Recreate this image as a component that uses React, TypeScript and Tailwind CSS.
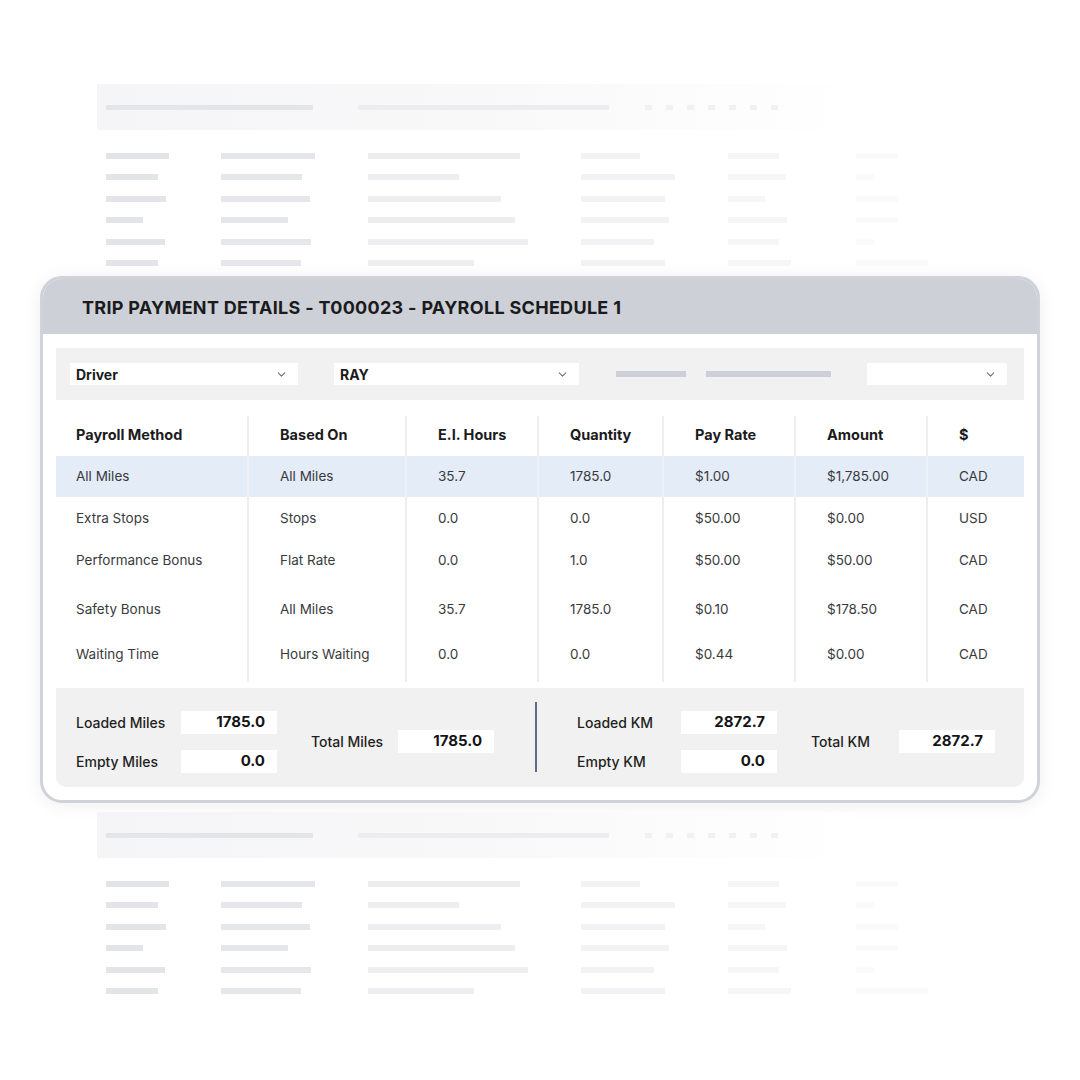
import React from 'react';
import { ChevronDown } from 'lucide-react';

const font = { fontFamily: 'Inter, "Noto Sans", sans-serif' };

// widths of the faded placeholder bars, per column, per row
const skelCols = [
  { w: [63, 52, 60, 37, 59, 52], cls: 'bg-[#e3e4e8]', col: 'w-[115px]' },
  { w: [94, 81, 89, 67, 90, 80], cls: 'bg-[#e6e7eb]', col: 'w-[147px]' },
  { w: [152, 91, 133, 147, 160, 106], cls: 'bg-[#eeeef1]', col: 'w-[213px]' },
  { w: [59, 94, 84, 88, 73, 84], cls: 'bg-[#f2f2f4]', col: 'w-[147px]' },
  { w: [51, 58, 37, 59, 51, 63], cls: 'bg-[#f6f6f7]', col: 'w-[128px]' },
  { w: [42, 18, 42, 42, 18, 72], cls: 'bg-[#fafafb]', col: 'w-[100px]' },
];

const SkeletonTable: React.FC = () => (
  <div className="ml-[97px] w-[760px]">
    <div className="h-[46px] flex items-center pl-[9px] gap-[45px] bg-gradient-to-r from-[#f5f5f7] via-[#f8f8f9] to-white">
      <div className="h-[5px] w-[207px] bg-[#e4e5e9]" />
      <div className="h-[5px] w-[251px] bg-[#ededf0]" />
      <div className="flex gap-[14px] ml-[-9px]">
        {[0, 1, 2, 3, 4, 5, 6].map((i) => (
          <div key={i} className="h-[5px] w-[7px] bg-[#f1f1f3]" />
        ))}
      </div>
    </div>
    <div className="flex pl-[9px] pt-[23px]">
      {skelCols.map((c, ci) => (
        <div key={ci} className={`${c.col} shrink-0 flex flex-col gap-[15.4px]`}>
          {c.w.map((w, ri) => (
            <div key={ri} className={`h-[6px] ${c.cls}`} style={{ width: w }} />
          ))}
        </div>
      ))}
    </div>
  </div>
);

const Select: React.FC<{ label: string; w: string }> = ({ label, w }) => (
  <div className={`${w} h-[22px] bg-white flex items-center justify-between pl-[6px] pr-[10px]`}>
    <span className="text-[14px] font-bold text-[#1b1b1d]">{label}</span>
    <ChevronDown className="w-[13px] h-[13px] text-[#6b7280]" strokeWidth={2} />
  </div>
);

const rows = [
  { h: 'h-[41px]', hl: true, c: ['All Miles', 'All Miles', '35.7', '1785.0', '$1.00', '$1,785.00', 'CAD'] },
  { h: 'h-[42px]', c: ['Extra Stops', 'Stops', '0.0', '0.0', '$50.00', '$0.00', 'USD'] },
  { h: 'h-[42px]', c: ['Performance Bonus', 'Flat Rate', '0.0', '1.0', '$50.00', '$50.00', 'CAD'] },
  { h: 'h-[56px]', c: ['Safety Bonus', 'All Miles', '35.7', '1785.0', '$0.10', '$178.50', 'CAD'] },
  { h: 'h-[35px]', c: ['Waiting Time', 'Hours Waiting', '0.0', '0.0', '$0.44', '$0.00', 'CAD'] },
];

const headers = ['Payroll Method', 'Based On', 'E.I. Hours', 'Quantity', 'Pay Rate', 'Amount', '$'];
const grid = 'grid grid-cols-[191px_158px_132px_125px_132px_132px_98px]';

const Field: React.FC<{ label: string; value: string; lw: string }> = ({ label, value, lw }) => (
  <div className="flex items-center">
    <span className={`${lw} text-[14px] font-medium text-[#1f1f22]`}>{label}</span>
    <div className="w-[96px] h-[23px] bg-white flex items-center justify-end pr-[12px] text-[15px] font-bold text-[#141416]">
      {value}
    </div>
  </div>
);

const Totals: React.FC<{ a: string; av: string; b: string; bv: string; t: string; tv: string; lw: string; tw: string }> = (p) => (
  <div className="flex items-center">
    <div className="flex flex-col gap-[16px]">
      <Field label={p.a} value={p.av} lw={p.lw} />
      <Field label={p.b} value={p.bv} lw={p.lw} />
    </div>
    <div className="ml-[34px] mt-[-2px]">
      <Field label={p.t} value={p.tv} lw={p.tw} />
    </div>
  </div>
);

export default function App() {
  return (
    <div className="w-[1080px] h-[1080px] bg-white overflow-hidden pt-[84px]" style={font}>
      <div className="h-[186px] overflow-hidden">
        <SkeletonTable />
      </div>

      {/* Trip payment card */}
      <div className="mt-[6px] ml-[40px] w-[1000px] h-[527px] rounded-[22px] border-[3px] border-[#cfd2d9] bg-white overflow-hidden shadow-[0_2px_18px_rgba(0,0,0,0.07)]">
        <div className="h-[55px] bg-[#cdd0d7] flex items-center pl-[39px] pt-[1px]">
          <h1 className="text-[18px] font-bold tracking-[0.3px] text-[#1b1b1d]">
            TRIP PAYMENT DETAILS - T000023 - PAYROLL SCHEDULE 1
          </h1>
        </div>

        <div className="px-[13px] pt-[14px]">
          {/* filters */}
          <div className="h-[52px] bg-[#f1f1f1] flex items-center pl-[14px]">
            <Select label="Driver" w="w-[228px]" />
            <div className="ml-[36px]">
              <Select label="RAY" w="w-[245px]" />
            </div>
            <div className="ml-[37px] h-[6px] w-[70px] bg-[#cdd0d7]" />
            <div className="ml-[20px] h-[6px] w-[125px] bg-[#cdd0d7]" />
            <div className="ml-[36px]">
              <Select label="" w="w-[140px]" />
            </div>
          </div>

          {/* table */}
          <div className="mt-[16px] text-[13.5px] text-[#3a3a3d]">
            <div className={`${grid} h-[40px]`}>
              {headers.map((h, i) => (
                <div
                  key={h}
                  className={`flex items-center pb-[2px] font-bold text-[14.5px] text-[#1b1b1d] ${i === 0 ? 'pl-[20px]' : 'pl-[31px] border-l-2 border-[#eeeeee]'}`}
                >
                  {h}
                </div>
              ))}
            </div>
            {rows.map((r, ri) => (
              <div key={ri} className={`${grid} ${r.h} ${r.hl ? 'bg-[#e4ecf7]' : ''}`}>
                {r.c.map((c, i) => (
                  <div
                    key={i}
                    className={`flex items-center ${i === 0 ? 'pl-[20px]' : `pl-[31px] border-l-2 ${r.hl ? 'border-[#eef2f8]' : 'border-[#eeeeee]'}`}`}
                  >
                    {c}
                  </div>
                ))}
              </div>
            ))}
            <div className={`${grid} h-[10px]`}>
              {headers.map((h, i) => (
                <div key={h} className={i === 0 ? '' : 'border-l-2 border-[#eeeeee]'} />
              ))}
            </div>
          </div>

          {/* totals */}
          <div className="mt-[6px] h-[99px] bg-[#f1f1f1] rounded-b-[10px] flex items-start pt-[23px] pl-[20px]">
            <Totals a="Loaded Miles" av="1785.0" b="Empty Miles" bv="0.0" t="Total Miles" tv="1785.0" lw="w-[105px]" tw="w-[87px]" />
            <div className="ml-[41px] mt-[-9px] w-[2px] h-[70px] bg-[#5f6b80]" />
            <div className="ml-[40px]">
              <Totals a="Loaded KM" av="2872.7" b="Empty KM" bv="0.0" t="Total KM" tv="2872.7" lw="w-[104px]" tw="w-[88px]" />
            </div>
          </div>
        </div>
      </div>

      <div className="mt-[9px] h-[200px] overflow-hidden">
        <SkeletonTable />
      </div>
    </div>
  );
}
